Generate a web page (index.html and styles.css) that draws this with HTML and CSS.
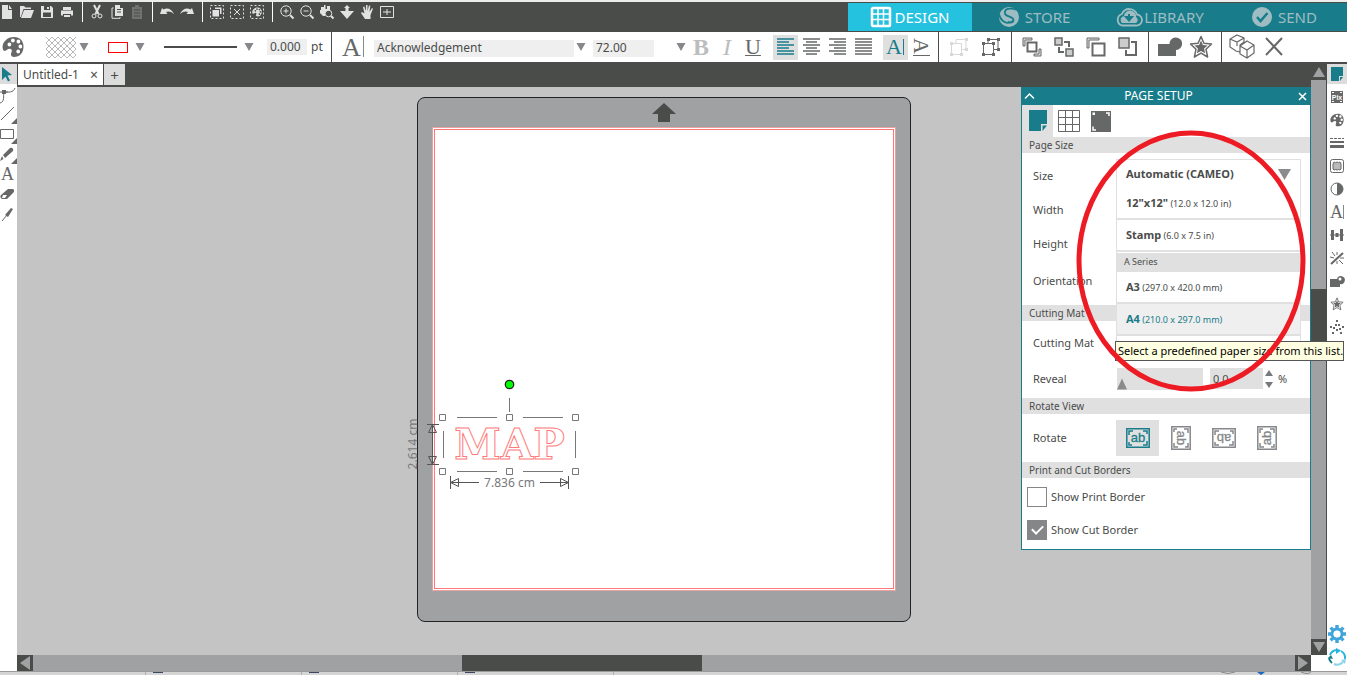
FILE: index.html
```html
<!DOCTYPE html>
<html lang="en">
<head>
<meta charset="utf-8">
<title>Untitled-1</title>
<link rel="stylesheet" href="styles.css">
</head>
<body>
<svg class="defs" aria-hidden="true">
  <symbol id="palette" viewBox="0 0 22 22"><path fill-rule="evenodd" d="M12 1C18 1 21.500 5 21.500 10.500C21.500 17 17.500 21 12 21C8.500 21 8.500 18 9.500 16.200C10.500 14 9 12 6.500 13C4 14 2.500 16.500 1 13.500C-1 8 4 1 12 1ZM5.500 8.500a1.900 1.900 0 1 0 3.800 0a1.900 1.900 0 1 0-3.800 0M9 4.500a1.900 1.900 0 1 0 3.800 0a1.900 1.900 0 1 0-3.800 0M14.500 5.500a1.900 1.900 0 1 0 3.800 0a1.900 1.900 0 1 0-3.800 0M16.500 10.500a1.900 1.900 0 1 0 3.800 0a1.900 1.900 0 1 0-3.800 0M14.300 15.500a1.900 1.900 0 1 0 3.800 0a1.900 1.900 0 1 0-3.800 0"/></symbol>
  <symbol id="down" viewBox="0 0 10 8"><path d="M.5 0h9L5 8z"/></symbol>
  <symbol id="page" viewBox="0 0 18 22"><path d="M0 0h18v14h-6v7H0z"/><path d="M13.500 21v-5.500H18z"/></symbol>
  <symbol id="star" viewBox="0 0 24 24"><path d="M12 1.500l2.900 6.700 7.600.8-5.500 5.200 1.600 7.800-6.600-3.900L5.400 22 7 14.200 1.500 9l7.600-.8z" fill="none" stroke="#666867" stroke-width="1.500" stroke-linejoin="round"/><path d="M12 5.500l1.900 4.400 4.700.5-3.500 3.200 1 4.700-4.100-2.400-4.100 2.400 1-4.700-3.500-3.200 4.700-.5z"/></symbol>
  <symbol id="weld" viewBox="0 0 24 20"><path d="M0 7h11.500A6.300 6.300 0 1 1 18 13v6H0z"/></symbol>
  <symbol id="ab" viewBox="0 0 24 20"><path d="M.8.800h22.400v18.400H.8zM3 7V3h4M21 13v4h-4M17 3h4v3M3 14v3h3" fill="none" stroke="currentColor" stroke-width="1.500"/><text x="12" y="14" text-anchor="middle" class="ab-text">ab</text></symbol>
</svg>

<header class="topbar">
  <div class="quick" role="toolbar" aria-label="File">
    <button aria-label="New"><svg viewBox="0 0 14 14"><path d="M2 0h6v5h4v9H2zM9 0l3 4H9z"/></svg></button>
    <button aria-label="Open"><svg viewBox="0 0 14 14"><path d="M0 12V1h4l1.500 1.500H11V4H3.500L.8 12z"/><path d="M4 5h10l-3 8H1z"/></svg></button>
    <button aria-label="Save"><svg viewBox="0 0 14 14"><path fill-rule="evenodd" d="M1 1h10l2 2v10H1zM4 1v4h6V1zM3 7.500V12h8V7.500z"/><path d="M7 2h2v2H7z"/></svg></button>
    <button aria-label="Print"><svg viewBox="0 0 14 14"><path d="M3 2h8v3H3zM1 5.500h12v5h-2V9H3v1.500H1zM4 10h6v2H4z"/></svg></button>
    <i class="bar"></i>
    <button aria-label="Cut"><svg viewBox="0 0 14 14"><path d="M4 0l4.500 9M10 0L5.500 9" class="ln w2"/><circle cx="4" cy="11" r="2" class="ln"/><circle cx="10" cy="11" r="2" class="ln"/></svg></button>
    <button aria-label="Copy"><svg viewBox="0 0 14 14"><path d="M5 0h5v3h3v8H5z"/><path d="M3.500 3H2v10.300h8V12M7 4h3M7 6h4M7 8h4" class="ln"/><path d="M7 4.500h4M7 7h4" stroke="#4a4c4a"/></svg></button>
    <button aria-label="Paste" class="faded"><svg viewBox="0 0 14 14"><path d="M2 2h3V0h4v2h3v12H2z"/><path d="M4 5h6M4 8h6M4 11h6" stroke="#4a4c4a"/></svg></button>
    <i class="bar"></i>
    <button aria-label="Undo"><svg viewBox="0 0 14 14"><path d="M0 9l2-6 1.500 1.500C7 2 12 4 14 9c-3-3-6-3-8-2l1.500 2z"/></svg></button>
    <button aria-label="Redo"><svg viewBox="0 0 14 14"><path d="M14 9l-2-6-1.500 1.500C7 2 2 4 0 9c3-3 6-3 8-2L6.500 9z"/></svg></button>
    <i class="bar"></i>
    <button aria-label="Select all"><svg viewBox="0 0 14 14"><path class="ln dash" d="M.5.500h13v13H.5z"/><path d="M5 2.500h6.500V9H10V4H5zM2.500 5H9v6.500H2.500z"/></svg></button>
    <button aria-label="Deselect all"><svg viewBox="0 0 14 14"><path class="ln dash" d="M.5.500h13v13H.5z"/><path class="ln" d="M4 4l6 6M10 4l-6 6"/></svg></button>
    <button aria-label="Select by color"><svg viewBox="0 0 14 14"><path class="ln dash" d="M.5.500h13v13H.5z"/><use href="#palette" x="2" y="2" width="10" height="10"/></svg></button>
    <i class="bar"></i>
    <button aria-label="Zoom in"><svg viewBox="0 0 14 14"><circle cx="6" cy="6" r="5.200" class="ln"/><path class="ln w2" d="M10 10l3.500 3.500"/><path class="ln" d="M3.500 6h5M6 3.500v5"/></svg></button>
    <button aria-label="Zoom out"><svg viewBox="0 0 14 14"><circle cx="6" cy="6" r="5.200" class="ln"/><path class="ln w2" d="M10 10l3.500 3.500"/><path class="ln" d="M3.500 6h5"/></svg></button>
    <button aria-label="Zoom selection"><svg viewBox="0 0 14 14"><path d="M1 2h3V0h1.500v4H7V1h3v4l-5 2v4H3L0 8V5h1z"/><circle cx="8.500" cy="8.500" r="3.300" class="ln"/><path class="ln w2" d="M11 11l2.500 2.500"/></svg></button>
    <button aria-label="Zoom drag"><svg viewBox="0 0 14 14"><path d="M7 0l3 3H8.500v3H14l-7 8-7-8h5.500V3H4z"/></svg></button>
    <button aria-label="Pan"><svg viewBox="0 0 14 14"><path d="M5 14L1 8l1-1 2.500 1.500L3 2l1.300-.5L6 6V0h1.500v6L9 .5l1.300.3L9.500 7 12 3l1 .7L10.500 10v4z"/></svg></button>
    <button aria-label="Fit to page"><svg viewBox="0 0 14 14"><path class="ln" d="M.5 1.500h13v11H.5zM3 7h8M7 4v6"/></svg></button>
  </div>
  <nav class="modes">
    <a href="#design" class="current-mode"><svg width="20" height="20" viewBox="0 0 20 20"><rect x="1" y="1" width="18" height="18" rx="1" fill="none" stroke="#fff" stroke-width="2.500"/><path d="M7 1v18M12.500 1v18M1 7h18M1 12.500h18" stroke="#fff" stroke-width="1.500"/></svg>DESIGN</a>
    <a href="#store"><svg width="20" height="20" viewBox="0 0 20 20"><circle cx="10" cy="10" r="10"/><path d="M18 3C11 0 5 2 6 6.500c1 4 9 2.500 8.500 7C14 16 10 16 9 14.500M0 7c2 8 8 11 14 7" fill="none" stroke="#187c8a" stroke-width="1.800"/></svg>STORE</a>
    <a href="#library" class="tight"><svg width="28" height="20" viewBox="0 0 28 20"><path d="M7 18.500h14a5.500 5.500 0 0 0 1-11A8 8 0 0 0 7 7a6 6 0 0 0 0 11.500z" fill="none" stroke="currentColor" stroke-width="1.800"/><path d="M7 16h14a3.500 3.500 0 0 0 0-6A6 6 0 0 0 9 9a4 4 0 0 0-2 7z"/><path d="M14 7v3.500M11 10h6l-3 3.500z" stroke="#187c8a" stroke-width="2" fill="#187c8a"/></svg>LIBRARY</a>
    <a href="#send"><svg width="20" height="20" viewBox="0 0 20 20"><circle cx="10" cy="10" r="10"/><path d="M5 10l3.500 4L15.500 6" fill="none" stroke="#187c8a" stroke-width="2.500"/></svg>SEND</a>
  </nav>
</header>

<div class="options" role="toolbar" aria-label="Style">
  <div class="group g-line">
    <button aria-label="Color"><svg class="g" width="22" height="22"><use href="#palette"/></svg></button>
    <button class="combo" aria-label="Fill pattern"><svg width="30" height="21"><defs><pattern id="hatch" width="6" height="6" patternUnits="userSpaceOnUse"><path d="M0 0l6 6M6 0L0 6" stroke="#a5a6a6" stroke-width=".8"/></pattern></defs><rect width="30" height="21" fill="url(#hatch)"/></svg><svg class="dd" width="10" height="8"><use href="#down"/></svg></button>
    <button class="combo wide" aria-label="Line color"><i class="swatch"></i><svg class="dd" width="10" height="8"><use href="#down"/></svg></button>
    <button class="combo wide" aria-label="Line style"><i class="stroke"></i><svg class="dd" width="10" height="8"><use href="#down"/></svg></button>
    <label class="thick"><input value="0.000" aria-label="Line thickness">pt</label>
  </div>
  <div class="group g-text">
    <svg class="cursor-a" width="24" height="24" viewBox="0 0 24 24"><text x="0" y="21" class="serif">A</text><path d="M21.500 1v21" stroke="#888"/></svg>
    <label class="pick"><select aria-label="Font"><option>Acknowledgement</option></select><svg class="dd" width="10" height="8"><use href="#down"/></svg></label>
    <label class="pick size"><select aria-label="Font size"><option>72.00</option></select><svg class="dd" width="10" height="8"><use href="#down"/></svg></label>
    <button class="letter bold">B</button>
    <button class="letter ital">I</button>
    <button class="letter under">U</button>
    <div class="aligns">
      <button class="on" aria-label="Align left"><svg width="18" height="18"><path d="M0 1h17M0 4h12M0 7h17M0 10h12M0 13h17M0 16h17"/></svg></button>
      <button aria-label="Align center"><svg width="18" height="18"><path d="M0 1h17M3 4h11M0 7h17M3 10h11M0 13h17M3 16h11"/></svg></button>
      <button aria-label="Align right"><svg width="18" height="18"><path d="M0 1h17M5 4h12M0 7h17M5 10h12M0 13h17M5 16h12"/></svg></button>
      <button aria-label="Justify"><svg width="18" height="18"><path d="M0 1h17M0 4h17M0 7h17M0 10h17M0 13h17M0 16h17"/></svg></button>
    </div>
    <div class="direction">
      <button class="on" aria-label="Horizontal text"><svg width="19" height="20" viewBox="0 0 19 20"><text x="0" y="17" class="serif sm">A</text><path d="M17.500 2v16" stroke="#187c8a"/></svg></button>
      <button aria-label="Vertical text"><svg width="19" height="20" viewBox="0 0 19 20"><text transform="translate(2 1) rotate(90)" class="serif sm">A</text><path d="M1 18.500h17" stroke="#666867"/></svg></button>
    </div>
  </div>
  <div class="group g-pair">
    <button aria-label="Group" class="faded"><svg class="k" width="18" height="18" viewBox="0 0 18 18"><path d="M1.500 5.500h10v11h-10zM6 5.500v-4h10v10h-4"/><path class="s" d="M0 4h3v3H0zM10 15h3v3h-3zM0 15h3v3H0zM15 0h3v3h-3zM15 10h3v3h-3z"/></svg></button>
    <button aria-label="Ungroup"><svg class="k" width="18" height="18" viewBox="0 0 18 18"><path d="M1.500 5.500h10v11h-10zM6 5.500v-4h10v10h-4"/><path class="s" d="M0 4h3v3H0zM10 15h3v3h-3zM0 15h3v3H0zM10 4h3v3h-3zM5 0h3v3H5zM15 0h3v3h-3zM15 10h3v3h-3z"/></svg></button>
  </div>
  <div class="group g-order">
    <button aria-label="Bring to front"><svg class="k" width="20" height="20" viewBox="0 0 20 20"><path d="M1 9V1h9v2H3v6zM17 12h2v7h-7v-2h5z" fill="#ddd"/><path d="M5.500 5.500h9v9h-9z" stroke-width="2"/></svg></button>
    <button aria-label="Bring forward"><svg class="k" width="20" height="20" viewBox="0 0 20 20"><path d="M1 1h7v7H1zM12 12h7v7h-7z" fill="#ccc" stroke-width="1.500"/><path d="M10 5h5v5M5 10v5h5" stroke-width="2"/></svg></button>
    <button aria-label="Send backward"><svg class="k" width="20" height="20" viewBox="0 0 20 20"><path d="M1 11V1h12v2H3v8z" fill="#ddd"/><path d="M6.500 6.500h12v12h-12z" stroke-width="2"/></svg></button>
    <button aria-label="Send to back"><svg class="k" width="20" height="20" viewBox="0 0 20 20"><path d="M1 1h10v10H1z" fill="#ccc" stroke-width="1.500"/><path d="M13 5h5v13H8v-5" stroke-width="2"/></svg></button>
  </div>
  <div class="group g-shape">
    <button aria-label="Weld"><svg class="g" width="24" height="20"><use href="#weld"/></svg></button>
    <button aria-label="Offset"><svg class="g" width="24" height="24"><use href="#star"/></svg></button>
  </div>
  <div class="group g-last">
    <button aria-label="3D"><svg class="k" width="26" height="26" viewBox="0 0 26 26"><path d="M8 1l7 3v4l-4 3v7L7 17l-6-4V5zM1 5l7 3 7-4M8 8v4M18 7l7 4v8l-7 5-7-4v-8zM11 12l7 4 7-5M18 16v8" stroke-width="1.200"/></svg></button>
    <button aria-label="Close"><svg class="k" width="20" height="20"><path d="M2 1l16 17M18 1L2 18" stroke-width="2"/></svg></button>
  </div>
</div>

<main class="work">
  <aside class="tools" aria-label="Drawing tools">
    <button class="on" aria-label="Select"><svg viewBox="0 0 17 20"><path d="M2 3l10 8-4.500.5 2.500 5-2 1-2.500-5L2 16z"/></svg></button>
    <button aria-label="Edit points"><svg viewBox="0 0 17 20"><path d="M0 19c5-1 3-7 4-11 5 0 9 1 11-4M0 8h8" class="o"/><path d="M2 6h4v4H2z"/></svg></button>
    <button aria-label="Line"><svg viewBox="0 0 17 20"><path d="M1 16L14 3" class="o"/><path d="M17 14v6h-6z"/></svg></button>
    <button aria-label="Rectangle"><svg viewBox="0 0 17 20"><path d="M.5 5.500h13v9H.5z" class="o"/><path d="M17 14v6h-6z"/></svg></button>
    <button aria-label="Freehand"><svg viewBox="0 0 17 20"><path d="M0 17l2-5 1.500 3zM3 11l7-7c2-1 4 1 3 3l-8 7z"/><path d="M17 14v6h-6z"/></svg></button>
    <button aria-label="Text"><svg viewBox="0 0 17 20"><text x="1" y="16" class="serif xs">A</text></svg></button>
    <button aria-label="Eraser"><svg viewBox="0 0 17 20"><path d="M1 11l7-6h5c2 1 1 3 0 4l-6 6H2c-2-1-2-3-1-4z"/><path d="M3 11h4l-2 3H2z" fill="#fff"/></svg></button>
    <button aria-label="Knife"><svg viewBox="0 0 17 20"><path d="M2 17l5-6" class="o"/><path d="M5 11l6-7 2 1-5 8z"/></svg></button>
  </aside>

  <section class="stage">
    <div class="tabs">
      <div class="tab"><span>Untitled-1</span><button aria-label="Close tab">×</button></div>
      <button class="add" aria-label="New tab">+</button>
    </div>
    <div class="canvas">
      <div class="mat">
        <svg class="load" width="24" height="19" viewBox="0 0 24 19"><path d="M12 0l12 11h-6v8H6v-8H0z"/></svg>
        <div class="sheet">
          <svg class="selection" width="180" height="130" viewBox="400 370 180 130">
            <g fill="none" stroke="#77787b"><path d="M509.500 398v14M457 417.500h40M523 417.500h40M457 471.500h40M523 471.500h40M443.500 431v27M575.500 431v27"/>
            <path d="M427 424.500h12M427 464.500h12M432.500 425v39M428.500 432.500h8l-4-8zM428.500 456.500h8l-4 8zM450.500 476v13M568.500 476v13M451 482.500h28M540 482.500h28M458.500 478.500v8l-8-4zM560.500 478.500v8l8-4z" stroke="#555"/>
            <path d="M439.500 414.500h6v6h-6zM506.500 414.500h6v6h-6zM572.500 414.500h6v6h-6zM439.500 468.500h6v6h-6zM506.500 468.500h6v6h-6zM572.500 468.500h6v6h-6z" fill="#fff"/></g>
            <circle cx="509.500" cy="384.500" r="4.200" fill="#0f0" stroke="#222" stroke-width="1.300"/>
            <text x="509.500" y="459" text-anchor="middle" class="shape">MAP</text>
            <text x="509.500" y="487" text-anchor="middle" class="dim">7.836 cm</text>
            <text transform="translate(417 444) rotate(-90)" text-anchor="middle" class="dim">2.614 cm</text>
          </svg>
        </div>
      </div>

      <section class="panel" aria-label="Page setup">
        <header><button aria-label="Collapse"><svg width="12" height="8"><path d="M2 6.500l4.500-4.500L11 6.500"/></svg></button><h1>PAGE SETUP</h1><button aria-label="Close panel"><svg width="9" height="9"><path d="M1 1l7 7M8 1L1 8"/></svg></button></header>
        <div class="ptabs">
          <button class="on" aria-label="Page"><svg width="18" height="22"><use href="#page"/></svg></button>
          <button aria-label="Grid"><svg width="22" height="22"><path d="M.5.500h21v21H.5zM7.500 0v22M14.500 0v22M0 7.500h22M0 14.500h22" fill="none" stroke="#666867"/></svg></button>
          <button aria-label="Registration marks"><svg width="20" height="21" viewBox="0 0 20 21"><path d="M0 0h20v21H0z" fill="#666867"/><path d="M1.500 1.500h2.500v2.500H1.500z" fill="#fff"/><path d="M15 2h3v3M2 15.500V19h3" fill="none" stroke="#fff" stroke-width="1.500"/></svg></button>
        </div>
        <h2>Page Size</h2>
        <div class="fields">
          <div class="row"><span>Size</span>
            <div class="sizes">
              <button class="current">Automatic (CAMEO)<svg width="13" height="11" viewBox="0 0 13 11"><path d="M0 0h13L6.500 11z" fill="#8a8b8d"/></svg></button>
              <ul role="listbox" aria-label="Size">
                <li role="option" class="first"><b>12"x12"</b> (12.0 x 12.0 in)</li>
                <li role="option"><b>Stamp</b> (6.0 x 7.5 in)</li>
                <li class="series">A Series</li>
                <li role="option"><b>A3</b> (297.0 x 420.0 mm)</li>
                <li role="option" aria-selected="true" class="hot"><b>A4</b> (210.0 x 297.0 mm)</li>
              </ul>
            </div>
          </div>
          <div class="row"><span>Width</span></div>
          <div class="row"><span>Height</span></div>
          <div class="row tall"><span>Orientation</span></div>
        </div>
        <h2>Cutting Mat</h2>
        <div class="row mat-row"><span>Cutting Mat</span></div>
        <div class="row reveal"><label for="reveal">Reveal</label>
          <input type="range" aria-label="Reveal amount" value="0" min="0" max="100">
          <input id="reveal" class="num" value="0.0">
          <span class="spin"><button aria-label="More"><svg width="8" height="6"><path d="M0 6h8L4 0z"/></svg></button><button aria-label="Less"><svg width="8" height="6"><path d="M0 0h8L4 6z"/></svg></button></span>
          <span>%</span>
        </div>
        <h2>Rotate View</h2>
        <div class="row rotate"><span>Rotate</span>
          <button class="on" aria-label="0 degrees"><svg width="24" height="20"><use href="#ab"/></svg></button>
          <button class="r90" aria-label="90 degrees"><svg width="24" height="20"><use href="#ab"/></svg></button>
          <button class="r180" aria-label="180 degrees"><svg width="24" height="20"><use href="#ab"/></svg></button>
          <button class="r270" aria-label="270 degrees"><svg width="24" height="20"><use href="#ab"/></svg></button>
        </div>
        <h2>Print and Cut Borders</h2>
        <div class="checks">
          <label><input type="checkbox">Show Print Border</label>
          <label><input type="checkbox" checked>Show Cut Border</label>
        </div>
        <div class="tip" role="tooltip">Select a predefined paper size from this list.</div>
        <svg class="ring" width="230" height="262" viewBox="0 0 230 262"><ellipse cx="115" cy="131" rx="112" ry="128"/></svg>
      </section>
    </div>
    <div class="hscroll"><button aria-label="Scroll left"><svg width="10" height="14"><path d="M10 0v14L0 7z"/></svg></button><div class="track"><i></i></div><button aria-label="Scroll right"><svg width="10" height="14"><path d="M0 0v14l10-7z"/></svg></button></div>
  </section>

  <div class="vscroll"><button aria-label="Scroll up"><svg width="12" height="10"><path d="M0 10h12L6 0z"/></svg></button><div class="track"><i></i></div><button aria-label="Scroll down"><svg width="12" height="10"><path d="M0 0h12L6 10z"/></svg></button></div>

  <aside class="panels" aria-label="Panels">
    <button class="on" aria-label="Page setup"><svg viewBox="0 0 14 14"><path d="M1 0h12v9H9v5H1z"/><path d="M10 14v-4h3z"/></svg></button>
    <button aria-label="PixScan"><svg viewBox="0 0 14 14"><path d="M1 1h12v12H1z"/><path d="M2 2.500h2M10 2.500h2M2 11.500h2M10 11.500h2" stroke="#fff"/><text x="7" y="10" text-anchor="middle" class="pix">Pix</text></svg></button>
    <button aria-label="Fill"><svg viewBox="0 0 14 14"><use href="#palette" width="14" height="14"/></svg></button>
    <button aria-label="Line style"><svg viewBox="0 0 14 14"><path d="M0 2h3v1H0zM4 2h3v1H4zM8 2h3v1H8zM12 2h2v1h-2zM0 5h14v2H0zM0 9h14v3H0z"/></svg></button>
    <button aria-label="Trace"><svg viewBox="0 0 14 14"><rect x=".5" y=".5" width="13" height="13" rx="2" class="o"/><path d="M4 3l1.500.7L7 3l1.500.7L10 3l1 2v5l-1 1-1.500-.5L7 11l-1.500-.5L4 11l-1-1V5z" fill="#bbb" stroke="#666867"/></svg></button>
    <button aria-label="Image effects"><svg viewBox="0 0 14 14"><circle cx="7" cy="7" r="6" class="o"/><path d="M7 1a6 6 0 0 1 0 12z"/></svg></button>
    <button aria-label="Text style"><svg viewBox="0 0 14 14"><text x="0" y="13" class="serif xs">A</text><path d="M13.500 0v14" stroke="#888"/></svg></button>
    <button aria-label="Align"><svg viewBox="0 0 14 14"><path d="M1 2h3v10H1zM10 1h3v12h-3zM5.500 5h3v4h-3zM0 6.500h14v1H0z"/></svg></button>
    <button aria-label="Transform"><svg viewBox="0 0 14 14"><path d="M1 13L13 2" class="o w2"/><path d="M2 1l3 4M9 9l4 4M0 6l4 1M10 7h4M7 1v3M7 10v3" class="o"/></svg></button>
    <button aria-label="Modify"><svg viewBox="0 0 14 14"><path d="M0 5h7a4 4 0 1 1 3 5v3H0z"/><circle cx="10" cy="5" r="1.500" fill="#fff"/></svg></button>
    <button aria-label="Offset"><svg viewBox="0 0 14 14"><use href="#star" width="14" height="14"/></svg></button>
    <button aria-label="Stipple"><svg viewBox="0 0 14 14"><path d="M6 0h2v2H6zM5 4h2v2H5zM8 4h2v2H8zM0 6h2v2H0zM12 6h2v2h-2zM3 7h2v2H3zM9 8h2v2H9zM6 9h2v2H6zM2 12h2v2H2zM10 12h2v2h-2z"/></svg></button>
    <button class="gear" aria-label="Preferences"><svg width="18" height="18" viewBox="0 0 18 18"><circle cx="9" cy="9" r="5" fill="none" stroke="#3fa5dc" stroke-width="3"/><path d="M9 0v4M9 14v4M0 9h4M14 9h4M2.600 2.600l3 3M12.400 12.400l3 3M15.400 2.600l-3 3M5.600 12.400l-3 3" stroke="#3fa5dc" stroke-width="3.400"/><circle cx="9" cy="9" r="3.300" fill="#fff"/></svg></button>
    <button aria-label="Sync"><svg width="18" height="18" viewBox="0 0 18 18"><g fill="none" stroke-width="2"><path d="M2 7a8 8 0 0 1 7-5" stroke="#25b4df"/><path d="M13 3a8 8 0 0 1 4 8" stroke="#25b4df"/><path d="M15 14a8 8 0 0 1-9 2" stroke="#8ed3e8"/><path d="M4 15a8 8 0 0 1-3-5" stroke="#187c8a"/></g><path d="M8 0l5 2.500L8 6z" fill="#25b4df"/><path d="M0 10l3-3 2 4z" fill="#187c8a"/><path d="M18 11l-5 1 4 4z" fill="#8ed3e8"/></svg></button>
  </aside>
</main>
<footer class="edge"><i></i><i></i><i></i><i></i><svg width="90" height="3" viewBox="0 0 90 3"><path d="M0 0q7 3 14 0M80 0q7 3 10 0" fill="none" stroke="#888"/><path d="M36 0h8l-4 3z" fill="#1668c0"/></svg></footer>
</body>
</html>
```

FILE: styles.css
```css
* { box-sizing: border-box; }
body {
  margin: 0; height: 100vh; display: flex; flex-direction: column; overflow: hidden;
  font: 12px/16px "Noto Sans", "Open Sans", sans-serif; color: #4a4c4a; background: #fff;
  border-top: 2px solid #ececec;
}
button { border: 0; padding: 0; margin: 0; background: none; font: inherit; color: inherit; display: flex; align-items: center; justify-content: center; flex: none; }
input, select { border: 0; margin: 0; font: inherit; color: inherit; border-radius: 0; }
svg { display: block; flex: none; overflow: visible; }
i { display: block; flex: none; }
ul { list-style: none; margin: 0; padding: 0; }
.defs { position: absolute; width: 0; height: 0; }
.serif { font-family: "Liberation Serif", serif; font-size: 26px; fill: #666867; }
.serif.sm { font-size: 22px; }
.serif.xs { font-size: 18px; }

.topbar { display: flex; justify-content: space-between; height: 30px; flex: none; background: #4a4c4a; }
.quick { display: flex; align-items: center; gap: 6px; height: 20px; }
.quick svg { width: 14px; height: 14px; fill: #e2e2e2; }
.quick .ln { fill: none; stroke: #e2e2e2; stroke-width: 1; }
.quick .w2 { stroke-width: 2; }
.quick .dash { stroke-dasharray: 2 2; }
.quick .faded { opacity: .25; }
.bar { width: 1px; height: 20px; margin: 0 1px 0 2px; background: #fff; }

.modes { display: grid; grid-template-columns: 124px repeat(3, 125px); margin: 1px 0; background: #187c8a; }
.modes a { display: flex; align-items: center; justify-content: center; gap: 6px; font-size: 15px; color: #9dbdc3; fill: #9dbdc3; text-decoration: none; }
.modes .tight { gap: 1px; }
.modes .current-mode { gap: 4px; background: #25c2df; color: #fff; }

.options { display: flex; height: 30px; flex: none; background: #fff; }
.group { display: flex; align-items: center; border-right: 1px solid #4a4c4a; }
.g { fill: #666867; }
.k { fill: none; stroke: #666867; }
.k .s { fill: #666867; stroke: none; }
.faded { opacity: .25; }
.dd { fill: #85878a; }
.combo { gap: 3px; }
.g-line { width: 332px; padding-left: 2px; }
.g-line .combo { margin-left: 22px; }
.g-line .wide { gap: 7px; margin-left: 19px; }
.swatch { width: 20px; height: 11px; border: 1px solid #f00; }
.stroke { width: 73px; height: 2px; background: #4a4c4a; }
.thick { display: flex; gap: 4px; margin-left: 13px; }
.thick input { width: 40px; height: 16px; padding: 0 3px; background: #efefef; }
.g-text { width: 607px; padding-left: 10px; }
.pick { display: flex; align-items: center; gap: 2px; margin-left: 8px; }
.pick select { appearance: none; width: 200px; height: 17px; margin-top: 2px; padding: 0 3px; background: #efefef; }
.pick.size { margin-left: 7px; gap: 22px; }
.pick.size select { width: 61px; }
.letter { width: 26px; font: 24px/24px "Liberation Serif", serif; color: #666867; }
.letter.bold { margin-left: 2px; font-weight: bold; color: #bcbdbd; }
.letter.ital { font-style: italic; color: #bcbdbd; }
.under { font-size: 22px; text-decoration: underline; text-decoration-thickness: 1px; }
.aligns { display: flex; gap: 1px; margin-left: 7px; }
.aligns button, .direction button { width: 25px; height: 25px; }
.aligns path { stroke: #666867; stroke-width: 1.500; }
.options .on { background: #dfdfdf; }
.aligns .on path { stroke: #187c8a; }
.direction { display: flex; gap: 1px; margin-left: 7px; }
.direction .on text { fill: #187c8a; }
.g-pair { width: 73px; gap: 14px; padding-left: 11px; }
.g-order { width: 137px; gap: 12px; padding-left: 10px; }
.g-shape { width: 73px; gap: 7px; padding-left: 9px; }
.g-last { gap: 9px; padding-left: 7px; border: 0; }

.work { flex: 1; min-height: 0; display: flex; border-top: 2px solid #4a4c4a; }
.tools { width: 17px; flex: none; background: #fff; }
.tools button { width: 17px; height: 20px; }
.tools svg { width: 17px; height: 20px; }
.tools svg, .panels svg { fill: #666867; }
.tools .on, .panels .on { background: #dcdcdc; }
.tools .on svg, .panels .on svg { fill: #187c8a; }
.o { fill: none; stroke: #666867; }
.w2 { stroke-width: 2; }

.stage { flex: 1; min-width: 0; display: flex; flex-direction: column; }
.tabs { display: flex; gap: 1px; height: 23px; padding: 0 0 2px 1px; flex: none; background: #4a4c4a; }
.tab { display: flex; align-items: center; justify-content: space-between; width: 85px; padding: 0 5px; background: #fff; }
.tab button { font-size: 14px; }
.add { width: 21px; background: #dcdcdc; font-size: 15px; }
.canvas { position: relative; flex: 1; min-height: 0; padding-top: 10px; background: #c4c4c4; }
.mat { width: 494px; margin: 0 auto; padding: 5px 14px 30px; background: #a0a1a3; border: 1px solid #222; border-radius: 8px; }
.load { margin: 0 auto 5px; fill: #4a4c4a; }
.sheet { position: relative; height: 464px; background: #fff; border: 1px solid #e8a0a0; box-shadow: inset 0 0 0 1px #fff, inset 0 0 0 2px #f77; }
.selection { position: absolute; left: -33px; top: 242px; }
.shape { font: bold 42px "DejaVu Serif", serif; fill: #fff; stroke: #ff7b7b; stroke-width: 1; }
.dim { font: 12px "Noto Sans", sans-serif; fill: #77787b; }

.hscroll { display: flex; height: 16px; flex: none; background: #4a4c4a; }
.hscroll button { width: 16px; height: 16px; }
.hscroll svg, .vscroll svg { fill: #a0a1a3; }
.track { flex: 1; background: #a0a1a3; }
.track i { background: #4a4c4a; }
.hscroll i { width: 19%; height: 100%; margin-left: 34%; }
.vscroll { width: 16px; flex: none; display: flex; flex-direction: column; margin-bottom: 16px; background: #4a4c4a; border-right: 1px solid #4a4c4a; }
.vscroll button { width: 15px; height: 16px; }
.vscroll .track { display: flex; flex-direction: column; }
.vscroll i { height: 70px; margin-top: 209px; }

.panels { width: 20px; flex: none; display: flex; flex-direction: column; gap: 3px; padding-bottom: 4px; background: #fff; }
.panels button { height: 20px; }
.panels svg { width: 14px; height: 14px; }
.panels .gear { margin-top: auto; }
.panels .gear svg, .panels .gear + button svg { width: 18px; height: 18px; }
.pix { font: bold 7px "Liberation Sans", sans-serif; fill: #fff; }

.panel { position: absolute; z-index: 2; top: 0; right: 0; width: 290px; font-size: 11px; background: #fff; border: 1px solid #187c8a; border-top: 0; }
.panel header { display: flex; align-items: center; justify-content: space-between; height: 18px; padding: 0 3px 0 1px; background: #187c8a; color: #fff; }
.panel header path { fill: none; stroke: #fff; stroke-width: 1.500; }
h1 { margin: 0 0 0 -16px; font-size: 12px; font-weight: 400; }
h2 { margin: 0; padding: 0 7px; font-size: 10px; line-height: 16px; font-weight: 400; background: #e0e0e0; }
.ptabs { display: flex; height: 32px; }
.ptabs button { width: 32px; }
.ptabs .on { width: 31px; fill: #187c8a; background: #e0e0e0; }
.fields { position: relative; padding: 6px 0 4px; }
.row { display: flex; align-items: center; height: 34px; padding-left: 11px; }
.row.tall { height: 40px; }
.sizes { position: absolute; z-index: 1; top: 6px; left: 94px; right: 9px; height: 184px; background: #fff; border: 1px solid #e0e0e0; }
.current { width: 100%; height: 28px; justify-content: space-between; padding: 0 9px; font-size: 11px; font-weight: 700; }
.sizes li { height: 32px; padding: 0 9px; font-size: 9px; line-height: 30px; border-bottom: 2px solid #e0e0e0; }
.sizes b { font-size: 11px; }
.sizes .first { height: 32px; }
.sizes .series { height: 20px; padding: 0 7px; line-height: 18px; background: #e0e0e0; border-top: 1px solid #fff; border-bottom: 1px solid #e0e0e0; }
.sizes .hot { color: #187c8a; background: #efefef; }
.mat-row { height: 44px; }
.row.reveal { height: 33px; padding-bottom: 6px; }
.reveal label { width: 84px; }
.reveal input[type=range] { appearance: none; width: 86px; height: 22px; background: #e0e0e0; }
.reveal input[type=range]::-webkit-slider-thumb { appearance: none; width: 10px; height: 22px; background: #8a8b8d; clip-path: polygon(50% 50%, 100% 100%, 0 100%); }
.reveal .num { width: 53px; height: 21px; margin-left: 7px; padding: 0 3px; background: #e0e0e0; }
.spin { display: grid; gap: 6px; margin: 0 5px 0 2px; fill: #77787b; }
.row.rotate { height: 48px; color: #85878a; }
.rotate span { width: 83px; color: #4a4c4a; }
.rotate button { width: 43px; height: 36px; }
.rotate .on { background: #e0e0e0; color: #187c8a; }
.r90 svg { transform: rotate(90deg); }
.r180 svg { transform: rotate(180deg); }
.r270 svg { transform: rotate(270deg); }
.ab-text { font: 13px "Liberation Sans", sans-serif; fill: currentColor; stroke: currentColor; stroke-width: .3; }
.checks { display: grid; gap: 13px; padding: 9px 5px; }
.checks label { display: flex; align-items: center; gap: 4px; }
.checks input { appearance: none; width: 20px; height: 20px; border: 1px solid #858688; background: #fff; display: grid; place-items: center; }
.checks input:checked { background: #858688; }
.checks input:checked::after { content: ""; width: 9px; height: 5px; margin-bottom: 3px; border: solid #fff; border-width: 0 0 2px 2px; transform: rotate(-45deg); }
.tip { position: absolute; z-index: 3; left: 93px; top: 254px; padding: 1px 0 1px 2px; white-space: nowrap; font-size: 11px; color: #000; background: #ffffe1; border: 1px solid #555; }
.ring { position: absolute; z-index: 4; left: 54px; top: 43px; fill: none; stroke: #ed1c24; stroke-width: 5; pointer-events: none; }

.edge { display: flex; height: 4px; flex: none; background: #d4d4d4; border-top: 1px solid #9a9a9a; }
.edge i { width: 156px; border-right: 1px solid #b0b0b0; }
.edge i:first-child { width: 146px; }
.edge i + i { background: linear-gradient(#3b4660, #3b4660) 7px 0 / 10px 1px no-repeat; }
.edge svg { margin: 0 36px 0 auto; }
```
